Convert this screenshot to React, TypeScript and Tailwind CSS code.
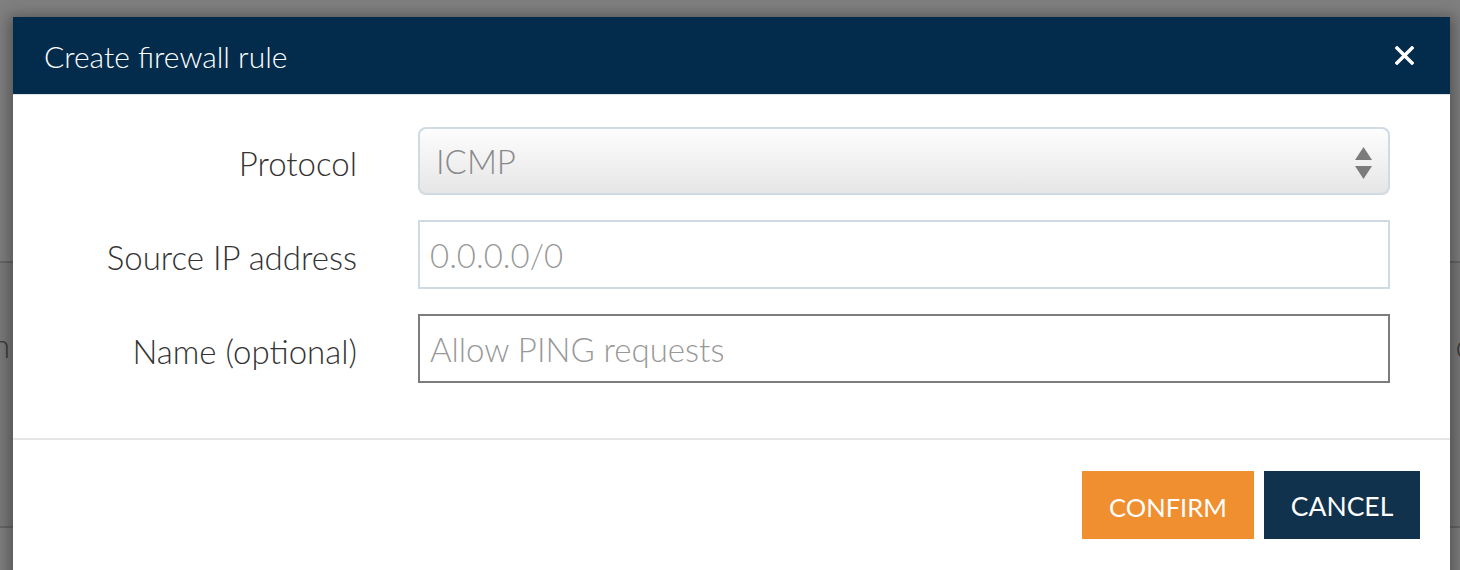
import React from 'react';

const FONT = { fontFamily: 'Lato, "Open Sans", sans-serif' };

function Row({ label, children }: { label: string; children: React.ReactNode }) {
  return (
    <div className="flex items-center">
      <label className="w-[344px] shrink-0 pt-[6px] text-right text-[33px] font-light text-[#333]">{label}</label>
      <div className="ml-[61px] flex-1">{children}</div>
    </div>
  );
}

export default function App() {
  return (
    <div className="relative h-[570px] w-[1460px] overflow-hidden bg-[#7f7f7f]" style={FONT}>
      {/* dimmed page behind */}
      <div className="h-[261px]" />
      <div className="flex h-[267px] items-start justify-between border-y-2 border-[#666] bg-[#7a7a7a] pt-[58px] text-[33px] font-light text-[#3a3a3a]">
        <span className="-ml-[8px]">h</span>
        <span className="-mr-[14px]">o</span>
      </div>

      <div className="absolute left-[13px] right-[10px] top-[17px] h-[600px] bg-white shadow-[0_3px_14px_4px_rgba(0,0,0,0.35)]">
        <div className="flex h-[77px] items-center justify-between bg-[#032c4c] pl-[31px] pr-[36px]">
          <h1 className="pt-[2px] text-[30px] font-light text-white">Create firewall rule</h1>
          <button className="text-white">
            <svg width="19" height="19" viewBox="0 0 19 19">
              <path d="M2 2L17 17M17 2L2 17" stroke="white" strokeWidth="3.4" strokeLinecap="square" />
            </svg>
          </button>
        </div>
        <div className="h-[1px] bg-[#e2e2e2]" />

        <div className="flex flex-col gap-[25px] pr-[60px] pt-[32px] pb-[55px]">
          <Row label="Protocol">
            <div className="relative flex h-[68px] items-center rounded-[8px] border-2 border-[#cfdae3] bg-gradient-to-b from-[#fdfdfd] to-[#e6e6e6] pl-[16px]">
              <span className="pt-[2px] text-[33px] font-light text-[#8a8a8a]">ICMP</span>
              <svg className="absolute right-[16px] top-[18px]" width="17" height="32" viewBox="0 0 17 32">
                <path d="M8.5 0L17 13H0Z" fill="#7b7b7b" />
                <path d="M0 19H17L8.5 32Z" fill="#7b7b7b" />
              </svg>
            </div>
          </Row>
          <Row label="Source IP address">
            <div className="flex h-[69px] items-center border-2 border-[#cfdae3] bg-white pl-[10px]">
              <span className="pt-[2px] text-[33px] font-light text-[#999]">0.0.0.0/0</span>
            </div>
          </Row>
          <Row label="Name (optional)">
            <div className="flex h-[69px] items-center border-2 border-[#7c7c7c] bg-white pl-[10px]">
              <span className="pt-[2px] text-[33px] font-light text-[#999]">Allow PING requests</span>
            </div>
          </Row>
        </div>

        <div className="h-[2px] bg-[#e6e6e6]" />

        <div className="flex justify-end gap-[10px] pr-[30px] pt-[31px]">
          <button className="h-[68px] w-[172px] bg-[#ef8f2f] pt-[4px] text-[25.5px] text-white">CONFIRM</button>
          <button className="h-[68px] w-[156px] bg-[#11324c] pt-[4px] text-[26.5px] text-white">CANCEL</button>
        </div>
      </div>
    </div>
  );
}
